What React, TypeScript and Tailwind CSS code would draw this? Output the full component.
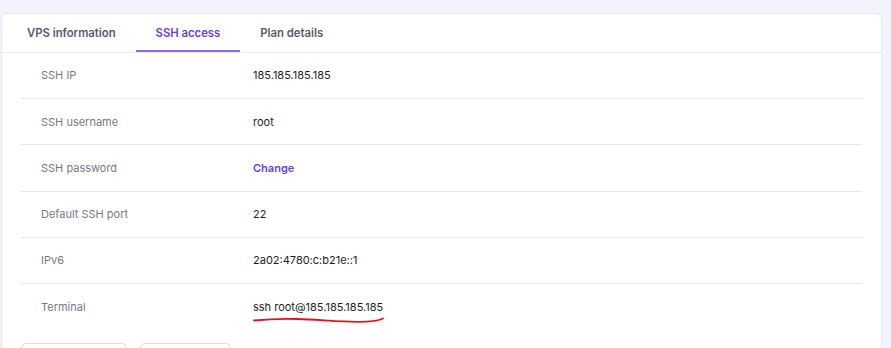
import React from "react";

const rows = [
  { label: "SSH IP", value: "185.185.185.185" },
  { label: "SSH username", value: "root" },
  { label: "SSH password", value: "Change", link: true },
  { label: "Default SSH port", value: "22" },
  { label: "IPv6", value: "2a02:4780:c:b21e::1" },
];

export default function App() {
  return (
    <div className="bg-[#f2f3fc] w-[891px] h-[348px] overflow-hidden pt-[13px] pl-[1px] font-['Inter',sans-serif]">
      <div className="w-[881px] h-[360px] bg-white rounded-t-[6px] border border-[#e6e7f0]">
        <div className="flex h-[39px] pl-[5px] border-b border-[#eeeef2]">
          <div className="px-5 flex items-center text-[11.3px] font-semibold text-[#575a6c]">VPS information</div>
          <div className="px-5 flex items-center text-[11.3px] font-semibold text-[#673de6] border-b-2 border-[#8c6af0] pt-[2px]">
            SSH access
          </div>
          <div className="px-5 flex items-center text-[11.3px] font-semibold text-[#575a6c]">Plan details</div>
        </div>
        <div className="mx-[19px]">
          {rows.map((r) => (
            <div key={r.label} className="flex items-center h-[46.2px] border-b border-[#e8e8ec] text-[11px]">
              <div className="w-[232px] pl-5 text-[#767988]">{r.label}</div>
              <div className={r.link ? "font-semibold text-[#673de6]" : "text-[#1d1e20]"}>{r.value}</div>
            </div>
          ))}
          <div className="flex items-center h-[46px] text-[11px]">
            <div className="w-[232px] pl-5 text-[#767988]">Terminal</div>
            <div className="relative text-[#1d1e20]">
              ssh root@185.185.185.185
              <svg className="absolute left-[0px] top-[16px]" width="134" height="9" viewBox="0 0 134 9">
                <path
                  d="M1 5.5 C 15 4, 30 3.5, 45 4 C 65 4.5, 85 6.8, 105 6.8 C 118 6.8, 126 5.5, 130 3.5"
                  fill="none"
                  stroke="#e5121b"
                  strokeWidth="1.8"
                  strokeLinecap="round"
                />
              </svg>
            </div>
          </div>
          <div className="flex gap-[13px] mt-[13px]">
            <div className="w-[106px] h-[34px] rounded-[5px] border border-[#dcdce3]" />
            <div className="w-[91px] h-[34px] rounded-[5px] border border-[#dcdce3]" />
          </div>
        </div>
      </div>
    </div>
  );
}
